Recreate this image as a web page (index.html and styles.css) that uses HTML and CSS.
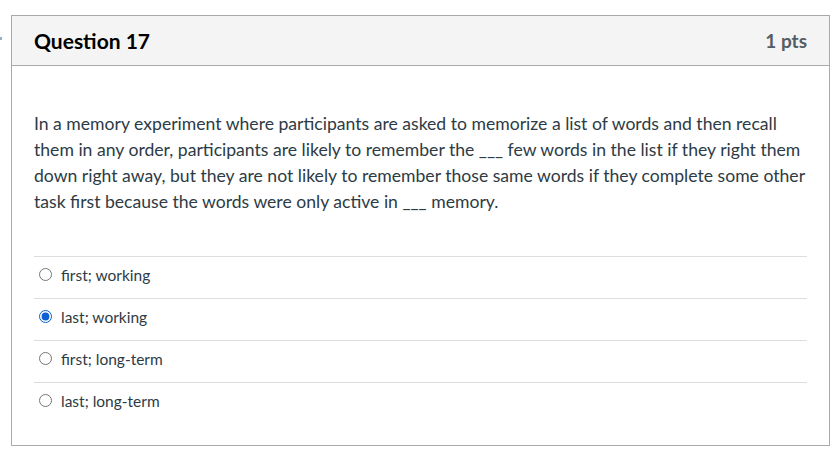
FILE: index.html
```html
<!DOCTYPE html>
<html>
<head>
<meta charset="utf-8">
<link rel="stylesheet" href="styles.css">
</head>
<body>
<div class="page">
  <span class="marker"></span>
  <div class="question">
    <div class="header">
      <span class="title">Question 17</span>
      <span class="pts">1 pts</span>
    </div>
    <div class="content">
      <p class="text">In a memory experiment where participants are asked to memorize a list of words and then recall them in any order, participants are likely to remember the ___ few words in the list if they right them down right away, but they are not likely to remember those same words if they complete some other task first because the words were only active in ___ memory.</p>
      <div class="answers">
        <label class="answer"><input type="radio" name="q"><span>first; working</span></label>
        <label class="answer"><input type="radio" name="q" checked><span>last; working</span></label>
        <label class="answer"><input type="radio" name="q"><span>first; long-term</span></label>
        <label class="answer"><input type="radio" name="q"><span>last; long-term</span></label>
      </div>
    </div>
  </div>
</div>
</body>
</html>
```
FILE: styles.css
```css
html, body {
  margin: 0;
  padding: 0;
  background: #fff;
}
body {
  font-family: Lato, "Noto Sans", sans-serif;
  color: #2d3b45;
}
.page {
  position: relative;
  padding: 15px 4px 0 11px;
}
.marker {
  position: absolute;
  left: 0;
  top: 37px;
  width: 2px;
  height: 3px;
  background: #8fb0cc;
}
.question {
  border: 1px solid #aaaaaa;
  width: 819px;
  height: 431px;
  box-sizing: border-box;
}
.header {
  display: flex;
  justify-content: space-between;
  align-items: center;
  height: 49px;
  background: #f4f4f4;
  border-bottom: 1px solid #aaaaaa;
  padding: 0 22px 0 22px;
}
.title {
  font-size: 21px;
  font-weight: 700;
  color: #000;
}
.pts {
  font-size: 19px;
  font-weight: 700;
  color: #555c63;
}
.content {
  padding: 45px 22px 0 22px;
}
.text {
  margin: 0;
  font-size: 17.6px;
  line-height: 26px;
  color: #2d3b45;
}
.answers {
  margin-top: 41px;
}
.answer {
  display: flex;
  align-items: center;
  padding-bottom: 6px;
  box-sizing: border-box;
  height: 42px;
  border-top: 1px solid #dddddd;
  font-size: 15.5px;
  color: #2d3b45;
}
.answer input {
  margin: 0 9px 0 5px;
  width: 13px;
  height: 13px;
  accent-color: #0b5fd0;
}
```
